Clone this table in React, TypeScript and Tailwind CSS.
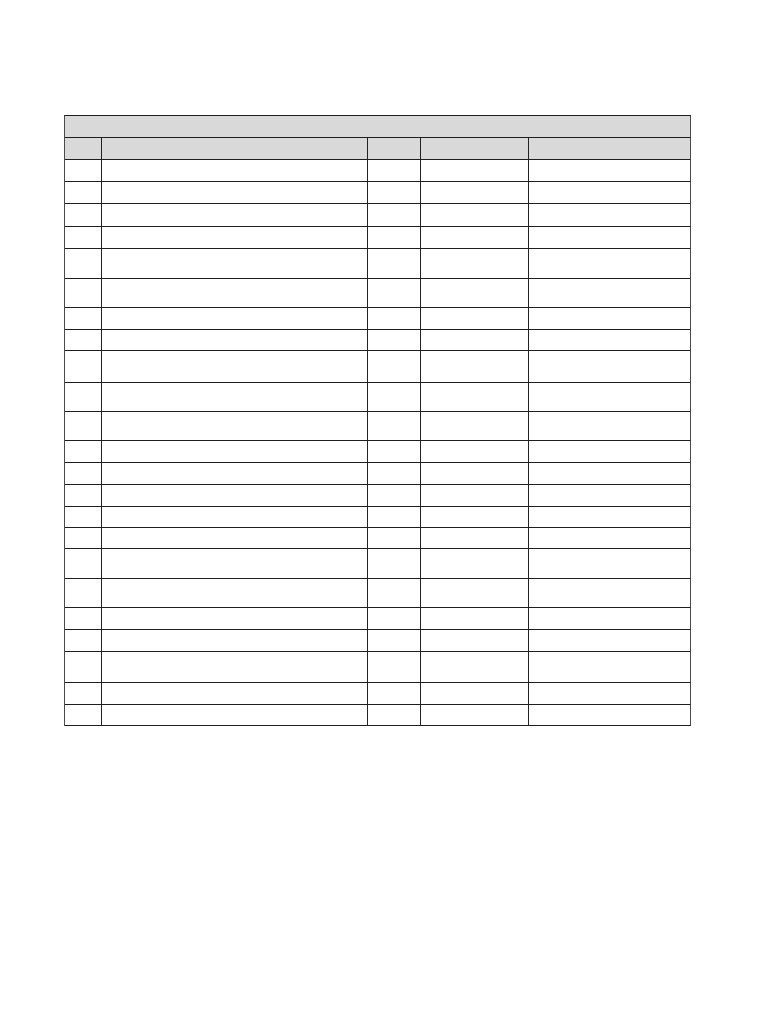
const COLS = 'grid-cols-[37px_266px_53px_108px_162px]';

// row heights taken from the sheet: title bar, column header, then the data rows
const ROWS = [22, 22, 22, 22, 23, 22, 30, 29, 22, 21, 32, 29, 29, 22, 22, 22, 21, 21, 30, 29, 22, 22, 31, 22, 21];

export default function App() {
  const body = ROWS.slice(2);
  return (
    <div className="min-h-screen w-[768px] bg-white pt-[115px] pl-[64px]" style={{ fontFamily: '"Liberation Sans", Arial, sans-serif' }}>
      <div className={`grid ${COLS} w-max border-l border-t border-l-[#4a4a4a] border-t-[#1e1e1e]`}>
        <div className="col-span-5 h-[22px] bg-[#d9d9d9] border-r border-b border-b-[#1e1e1e] border-r-[#4a4a4a]" />
        {[0, 1, 2, 3, 4].map((c) => (
          <div key={c} className={`h-[22px] bg-[#d9d9d9] border-r border-b border-b-[#1e1e1e] ${c === 4 ? 'border-r-[#4a4a4a]' : 'border-r-[#222]'}`} />
        ))}
        {body.map((h, r) =>
          [0, 1, 2, 3, 4].map((c) => (
            <div
              key={`${r}-${c}`}
              className={`border-r border-b border-b-[#1e1e1e] bg-white ${c === 4 ? 'border-r-[#4a4a4a]' : 'border-r-[#222]'}`}
              style={{ height: h }}
            />
          ))
        )}
      </div>
    </div>
  );
}
